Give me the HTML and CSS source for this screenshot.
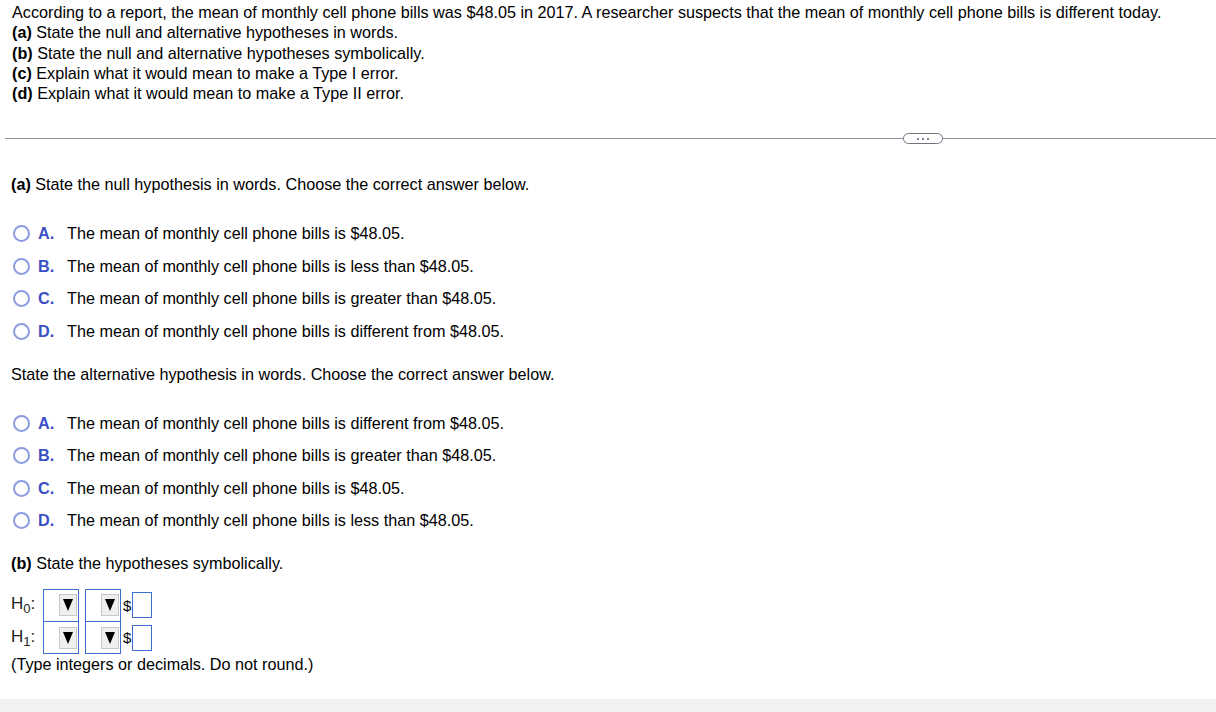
FILE: index.html
```
<!DOCTYPE html>
<html>
<head>
<meta charset="utf-8">
<link rel="stylesheet" href="styles.css">
</head>
<body>
<div class="page">
  <div class="question">
    <div class="qline">According to a report, the mean of monthly cell phone bills was $48.05 in 2017. A researcher suspects that the mean of monthly cell phone bills is different today.</div>
    <div class="qline"><b>(a)</b> State the null and alternative hypotheses in words.</div>
    <div class="qline"><b>(b)</b> State the null and alternative hypotheses symbolically.</div>
    <div class="qline"><b>(c)</b> Explain what it would mean to make a Type I error.</div>
    <div class="qline"><b>(d)</b> Explain what it would mean to make a Type II error.</div>
  </div>
  <div class="divider">
    <span class="pill"><i></i><i></i><i></i></span>
  </div>
  <div class="answer">
    <div class="prompt first"><b>(a)</b> State the null hypothesis in words. Choose the correct answer below.</div>
    <div class="options">
      <div class="opt"><span class="radio"></span><span class="letter">A.</span><span>The mean of monthly cell phone bills is $48.05.</span></div>
      <div class="opt"><span class="radio"></span><span class="letter">B.</span><span>The mean of monthly cell phone bills is less than $48.05.</span></div>
      <div class="opt"><span class="radio"></span><span class="letter">C.</span><span>The mean of monthly cell phone bills is greater than $48.05.</span></div>
      <div class="opt"><span class="radio"></span><span class="letter">D.</span><span>The mean of monthly cell phone bills is different from $48.05.</span></div>
    </div>
    <div class="prompt">State the alternative hypothesis in words. Choose the correct answer below.</div>
    <div class="options">
      <div class="opt"><span class="radio"></span><span class="letter">A.</span><span>The mean of monthly cell phone bills is different from $48.05.</span></div>
      <div class="opt"><span class="radio"></span><span class="letter">B.</span><span>The mean of monthly cell phone bills is greater than $48.05.</span></div>
      <div class="opt"><span class="radio"></span><span class="letter">C.</span><span>The mean of monthly cell phone bills is $48.05.</span></div>
      <div class="opt"><span class="radio"></span><span class="letter">D.</span><span>The mean of monthly cell phone bills is less than $48.05.</span></div>
    </div>
    <div class="prompt"><b>(b)</b> State the hypotheses symbolically.</div>
    <div class="hyps">
      <div class="hrow">
        <span class="hlabel">H<sub>0</sub>:</span>
        <span class="sel"><span class="arrow"></span></span>
        <span class="sel"><span class="arrow"></span></span>
        <span class="dollar">$</span>
        <span class="box"></span>
      </div>
      <div class="hrow">
        <span class="hlabel">H<sub>1</sub>:</span>
        <span class="sel"><span class="arrow"></span></span>
        <span class="sel"><span class="arrow"></span></span>
        <span class="dollar">$</span>
        <span class="box"></span>
      </div>
    </div>
    <div class="note">(Type integers or decimals. Do not round.)</div>
  </div>
  <div class="footer"></div>
</div>
</body>
</html>
```
FILE: styles.css
```
html, body {
  margin: 0;
  padding: 0;
  background: #fff;
}
body {
  font-family: "Liberation Sans", Arial, sans-serif;
  font-size: 16.2px;
  color: #000;
}
.page {
  width: 1216px;
  height: 712px;
  position: relative;
  overflow: hidden;
}
.question {
  padding: 2px 0 0 12px;
}
.qline {
  line-height: 20.3px;
}
.divider {
  margin: 35px 0 0 5px;
  height: 1px;
  background: #8a8f99;
  position: relative;
}
.pill {
  position: absolute;
  left: 898px;
  top: -5px;
  width: 38px;
  height: 9px;
  border: 1px solid #6f7682;
  border-radius: 6px;
  background: #fff;
  display: flex;
  justify-content: center;
  align-items: center;
  gap: 3px;
}
.pill i {
  width: 2px;
  height: 2px;
  background: #555b66;
  border-radius: 1px;
}
.answer {
  padding-left: 11px;
}
.prompt {
  line-height: 20px;
  margin-top: 16px;
}
.prompt.first {
  margin-top: 35px;
}
.options {
  margin-top: 23px;
  display: flex;
  flex-direction: column;
}
.opt {
  display: flex;
  align-items: center;
  height: 32.6px;
}
.radio {
  width: 13px;
  height: 13px;
  border: 2px solid #8d9be0;
  border-radius: 50%;
  margin-left: 2px;
  margin-right: 8px;
  box-sizing: content-box;
}
.letter {
  color: #3b4fc4;
  font-weight: bold;
  width: 29px;
}
.hyps {
  margin-top: 16px;
  display: flex;
  flex-direction: column;
}
.hrow {
  display: flex;
  align-items: center;
  height: 32.5px;
}
.hlabel {
  width: 32px;
  font-size: 17px;
  color: #222;
}
.hlabel sub {
  font-size: 13px;
}
.sel {
  width: 36px;
  height: 33px;
  box-sizing: border-box;
  border: 1px solid #3d6fd1;
  margin-right: 6px;
  display: flex;
  align-items: center;
  justify-content: flex-end;
  padding-right: 1px;
}
.arrow {
  width: 18px;
  height: 22px;
  background: #efefef;
  border: 1px solid #c8c8c8;
  box-sizing: border-box;
  position: relative;
}
.arrow::after {
  content: "";
  position: absolute;
  left: 3px;
  top: 4px;
  border-left: 5px solid transparent;
  border-right: 5px solid transparent;
  border-top: 12px solid #000;
}
.dollar {
  margin-left: -4px;
  margin-right: 1px;
  font-size: 15px;
}
.box {
  width: 18px;
  height: 24px;
  border: 1px solid #3d6fd1;
}
.note {
  line-height: 20px;
  margin-top: 0;
}
.footer {
  position: absolute;
  left: 0;
  right: 0;
  top: 699px;
  height: 13px;
  background: #f2f2f2;
}
```
